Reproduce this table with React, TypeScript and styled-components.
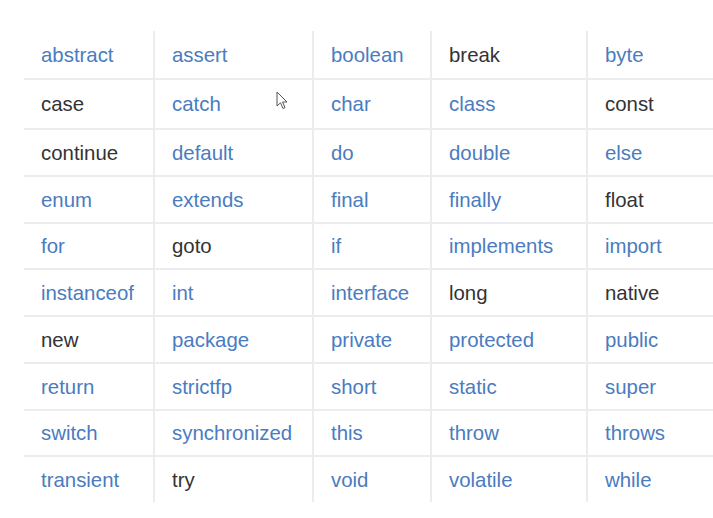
import React from "react";
import styled, { createGlobalStyle } from "styled-components";

const Global = createGlobalStyle`
  html, body { margin: 0; padding: 0; background: #ffffff; overflow: hidden; }
  body { font-family: "Liberation Sans", Arial, sans-serif; }
`;

const Page = styled.div`
  position: relative;
  width: 713px;
  height: 518px;
  padding: 31px 0 0 24px;
  box-sizing: border-box;
`;

const Table = styled.div`
  display: grid;
  grid-template-columns: 131px 159px 118px 156px 150px;
  width: 714px;
`;

const Row = styled.div`
  display: contents;
`;

const Cell = styled.div<{ $dark: boolean; $last: boolean; $first: boolean; $h: number }>`
  height: ${(p) => p.$h}px;
  box-sizing: border-box;
  display: flex;
  align-items: center;
  padding-left: ${(p) => (p.$first ? 17 : 17)}px;
  padding-top: 1px;
  border-bottom: ${(p) => (p.$last ? "none" : "2px solid #ececef")};
  border-right: 2px solid #ececef;
  &:nth-child(5n) { border-right: none; }
  font-size: 20.4px;
  color: ${(p) => (p.$dark ? "#333333" : "#4a7cbf")};
  white-space: nowrap;
`;

const Cursor = styled.svg`
  position: absolute;
  left: 276px;
  top: 91px;
`;

const K = true;
const B = false;

const rows: [string, boolean][][] = [
  [["abstract", B], ["assert", B], ["boolean", B], ["break", K], ["byte", B]],
  [["case", K], ["catch", B], ["char", B], ["class", B], ["const", K]],
  [["continue", K], ["default", B], ["do", B], ["double", B], ["else", B]],
  [["enum", B], ["extends", B], ["final", B], ["finally", B], ["float", K]],
  [["for", B], ["goto", K], ["if", B], ["implements", B], ["import", B]],
  [["instanceof", B], ["int", B], ["interface", B], ["long", K], ["native", K]],
  [["new", K], ["package", B], ["private", B], ["protected", B], ["public", B]],
  [["return", B], ["strictfp", B], ["short", B], ["static", B], ["super", B]],
  [["switch", B], ["synchronized", B], ["this", B], ["throw", B], ["throws", B]],
  [["transient", B], ["try", K], ["void", B], ["volatile", B], ["while", B]],
];

const heights = [49, 50, 47, 47, 46, 47, 47, 47, 46, 45];

export default function App() {
  return (
    <>
      <Global />
      <Page>
        <Table>
          {rows.map((r, i) => (
            <Row key={i}>
              {r.map(([w, dark], j) => (
                <Cell
                  key={w}
                  $dark={dark}
                  $last={i === rows.length - 1}
                  $first={j === 0}
                  $h={heights[i]}
                >
                  {w}
                </Cell>
              ))}
            </Row>
          ))}
        </Table>
        <Cursor width="13" height="19" viewBox="0 0 13 19">
          <path
            d="M1 1 L1 15 L4.5 11.8 L7 17.5 L9 16.6 L6.6 11 L11 11 Z"
            fill="#ffffff"
            stroke="#555"
            strokeWidth="1"
            strokeLinejoin="round"
          />
        </Cursor>
      </Page>
    </>
  );
}
